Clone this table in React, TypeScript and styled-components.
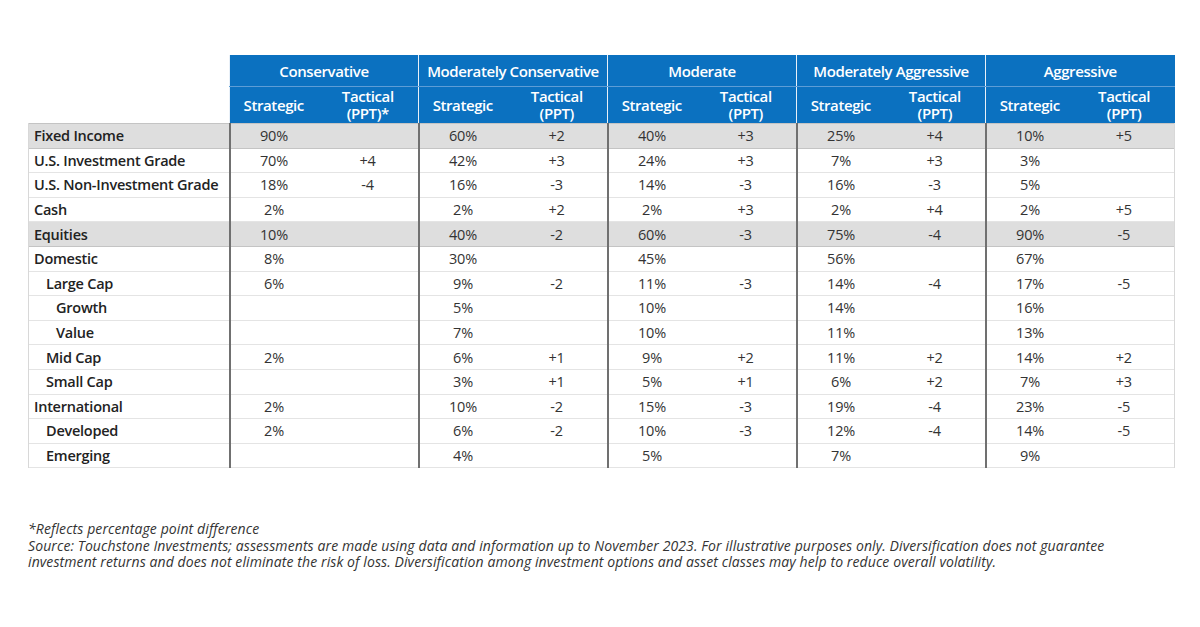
import React from 'react'
import styled, { createGlobalStyle } from 'styled-components'

const GlobalStyle = createGlobalStyle`
  html, body {
    margin: 0;
    padding: 0;
    background: #ffffff;
  }
  body {
    font-family: 'Open Sans', 'Liberation Sans', sans-serif;
    color: #2b2b2b;
  }
`

const Page = styled.div`
  box-sizing: border-box;
  display: flex;
  flex-direction: column;
  height: 627px;
  padding: 55px 27px 0 28px;
  width: 1200px;
`

const Table = styled.table`
  border-collapse: collapse;
  table-layout: fixed;
  width: 1145px;
`

const LabelCol = styled.col`
  width: 201px;
`

const StratCol = styled.col`
  width: 88px;
`

const TactCol = styled.col`
  width: 101px;
`

const Blank = styled.th`
  background: #ffffff;
  border: none;
`

const GroupHead = styled.th`
  background: #0b71c0;
  border-bottom: 1px solid #5d9dd6;
  border-left: 1px solid #e8f0f8;
  color: #ffffff;
  font-family: 'Open Sans', sans-serif;
  font-size: 15px;
  font-weight: 600;
  height: 31px;
  letter-spacing: -0.4px;
  padding: 0;
  text-align: center;
`

const SubHead = styled.th<{ $first?: boolean }>`
  background: #0b71c0;
  border-left: ${p => (p.$first ? '1px solid #e8f0f8' : 'none')};
  color: #ffffff;
  font-family: 'Open Sans', sans-serif;
  font-size: 15px;
  font-weight: 600;
  height: 36px;
  letter-spacing: -0.4px;
  line-height: 17px;
  padding: 0;
  text-align: center;
  vertical-align: middle;
`

const Row = styled.tr<{ $shade?: boolean }>`
  background: ${p => (p.$shade ? '#dedede' : '#ffffff')};
  border-bottom: 1px solid ${p => (p.$shade ? '#c4c4c4' : '#e4e4e4')};
  border-top: 1px solid ${p => (p.$shade ? '#c4c4c4' : '#e4e4e4')};
  height: 24.6px;
`

const Label = styled.td<{ $indent: number }>`
  border-left: 1px solid #d8d8d8;
  color: #222222;
  font-family: 'Open Sans', sans-serif;
  font-size: 14.5px;
  font-weight: 600;
  letter-spacing: -0.25px;
  padding: 0 0 0 ${p => 5 + p.$indent}px;
  white-space: nowrap;
`

const Value = styled.td<{ $first?: boolean; $last?: boolean }>`
  border-left: ${p => (p.$first ? '2px solid #707070' : 'none')};
  border-right: ${p => (p.$last ? '1px solid #d8d8d8' : 'none')};
  color: #333333;
  font-family: 'Open Sans', sans-serif;
  font-size: 14.5px;
  letter-spacing: -0.2px;
  padding: 0;
  text-align: center;
`

const Notes = styled.div`
  color: #333333;
  font-family: 'Open Sans', sans-serif;
  font-size: 14px;
  font-style: italic;
  letter-spacing: 0.1px;
  line-height: 16.5px;
  margin-top: 53px;
`

const groups = ['Conservative', 'Moderately Conservative', 'Moderate', 'Moderately Aggressive', 'Aggressive']

type Line = { label: string; indent: number; shade?: boolean; cells: string[] }

const lines: Line[] = [
  { label: 'Fixed Income', indent: 0, shade: true, cells: ['90%', '', '60%', '+2', '40%', '+3', '25%', '+4', '10%', '+5'] },
  { label: 'U.S. Investment Grade', indent: 0, cells: ['70%', '+4', '42%', '+3', '24%', '+3', '7%', '+3', '3%', ''] },
  { label: 'U.S. Non-Investment Grade', indent: 0, cells: ['18%', '-4', '16%', '-3', '14%', '-3', '16%', '-3', '5%', ''] },
  { label: 'Cash', indent: 0, cells: ['2%', '', '2%', '+2', '2%', '+3', '2%', '+4', '2%', '+5'] },
  { label: 'Equities', indent: 0, shade: true, cells: ['10%', '', '40%', '-2', '60%', '-3', '75%', '-4', '90%', '-5'] },
  { label: 'Domestic', indent: 0, cells: ['8%', '', '30%', '', '45%', '', '56%', '', '67%', ''] },
  { label: 'Large Cap', indent: 12, cells: ['6%', '', '9%', '-2', '11%', '-3', '14%', '-4', '17%', '-5'] },
  { label: 'Growth', indent: 22, cells: ['', '', '5%', '', '10%', '', '14%', '', '16%', ''] },
  { label: 'Value', indent: 22, cells: ['', '', '7%', '', '10%', '', '11%', '', '13%', ''] },
  { label: 'Mid Cap', indent: 12, cells: ['2%', '', '6%', '+1', '9%', '+2', '11%', '+2', '14%', '+2'] },
  { label: 'Small Cap', indent: 12, cells: ['', '', '3%', '+1', '5%', '+1', '6%', '+2', '7%', '+3'] },
  { label: 'International', indent: 0, cells: ['2%', '', '10%', '-2', '15%', '-3', '19%', '-4', '23%', '-5'] },
  { label: 'Developed', indent: 12, cells: ['2%', '', '6%', '-2', '10%', '-3', '12%', '-4', '14%', '-5'] },
  { label: 'Emerging', indent: 12, cells: ['', '', '4%', '', '5%', '', '7%', '', '9%', ''] },
]

export default function App() {
  return (
    <Page>
      <GlobalStyle />
      <Table>
        <colgroup>
          <LabelCol />
          {groups.map(g => (
            <React.Fragment key={g}>
              <StratCol />
              <TactCol />
            </React.Fragment>
          ))}
        </colgroup>
        <thead>
          <tr>
            <Blank />
            {groups.map(g => (
              <GroupHead key={g} colSpan={2}>
                {g}
              </GroupHead>
            ))}
          </tr>
          <tr>
            <Blank />
            {groups.map((g, i) => (
              <React.Fragment key={g}>
                <SubHead $first>Strategic</SubHead>
                <SubHead>
                  Tactical
                  <br />
                  (PPT){i === 0 ? '*' : ''}
                </SubHead>
              </React.Fragment>
            ))}
          </tr>
        </thead>
        <tbody>
          {lines.map(l => (
            <Row key={l.label} $shade={l.shade}>
              <Label $indent={l.indent}>{l.label}</Label>
              {l.cells.map((c, i) => (
                <Value key={i} $first={i % 2 === 0} $last={i === 9}>
                  {c}
                </Value>
              ))}
            </Row>
          ))}
        </tbody>
      </Table>
      <Notes>
        *Reflects percentage point difference
        <br />
        Source: Touchstone Investments; assessments are made using data and information up to November 2023. For
        illustrative purposes only. Diversification does not guarantee
        <br />
        investment returns and does not eliminate the risk of loss. Diversification among investment options and asset
        classes may help to reduce overall volatility.
      </Notes>
    </Page>
  )
}
